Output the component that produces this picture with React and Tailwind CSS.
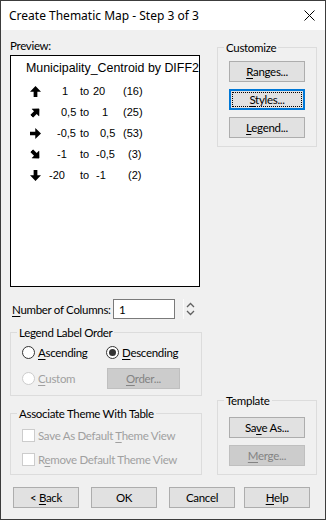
import React from "react";

const U = ({ children }) => <span className="underline underline-offset-[2px]">{children}</span>;

const Btn = ({ children, w = "w-[76px]", disabled, focused }) => {
  if (focused) {
    return (
      <div className={`${w} h-[21px] bg-[#e1e1e1] border-2 border-[#0078d7] p-[1px] flex`}>
        <div className="flex-1 border border-dotted border-black flex items-center justify-center leading-[15px]">
          {children}
        </div>
      </div>
    );
  }
  return (
    <div
      className={`${w} h-[21px] border flex items-center justify-center leading-[15px] ${
        disabled ? "bg-[#cccccc] border-[#bfbfbf] text-[#838383]" : "bg-[#e1e1e1] border-[#adadad] text-black"
      }`}
    >
      {children}
    </div>
  );
};

const Group = ({ title, className = "", children }) => (
  <div className={`relative border border-[#dcdcdc] ${className}`}>
    <span className="absolute left-[6px] top-[-8px] bg-[#f0f0f0] px-[2px] leading-[15px] whitespace-nowrap">{title}</span>
    {children}
  </div>
);

const Radio = ({ checked, disabled }) => (
  <span
    className={`w-[13px] h-[13px] rounded-full border flex items-center justify-center bg-white shrink-0 ${
      disabled ? "border-[#cccccc]" : "border-[#333333]"
    }`}
  >
    {checked && <span className="w-[7px] h-[7px] rounded-full bg-[#333333]" />}
  </span>
);

const Check = () => <span className="w-[13px] h-[13px] border border-[#cccccc] bg-white shrink-0" />;

const Arrow = ({ rot }) => (
  <svg width="11" height="11" viewBox="0 0 10 10" style={{ transform: `rotate(${rot}deg)` }}>
    <path d="M5 0 L10 5.2 L6.7 5.2 L6.7 10 L3.3 10 L3.3 5.2 L0 5.2 Z" fill="#000" />
  </svg>
);

const rows = [
  { rot: 0, lo: "1", loPl: "pl-[13px]", hi: "20", hiPl: "pl-0", n: "(16)", nPl: "pl-0" },
  { rot: 45, lo: "0,5", loPl: "pl-[12px]", hi: "1", hiPl: "pl-[9px]", n: "(25)", nPl: "pl-0" },
  { rot: 90, lo: "-0,5", loPl: "pl-[8px]", hi: "0,5", hiPl: "pl-[7px]", n: "(53)", nPl: "pl-0" },
  { rot: 135, lo: "-1", loPl: "pl-[8px]", hi: "-0,5", hiPl: "pl-[3px]", n: "(3)", nPl: "pl-[5px]" },
  { rot: 180, lo: "-20", loPl: "pl-0", hi: "-1", hiPl: "pl-[3px]", n: "(2)", nPl: "pl-[5px]" },
];

export default function App() {
  return (
    <div className="w-[326px] h-[520px] border border-[#3c3c3c] flex flex-col font-['Lato',sans-serif] text-[11.5px] tracking-[-0.3px] text-black overflow-hidden">
      {/* Title bar */}
      <div className="h-[29px] bg-white flex items-center pl-[8px] pr-[10px] shrink-0">
        <span className="flex-1 leading-[15px] text-[12px] tracking-normal font-['Noto_Sans',sans-serif]">
          Create Thematic Map - Step 3 of 3
        </span>
        <svg width="11" height="11" viewBox="0 0 11 11">
          <path d="M0.5 0.5 L10.5 10.5 M10.5 0.5 L0.5 10.5" stroke="#000" strokeWidth="1" />
        </svg>
      </div>

      {/* Body */}
      <div className="flex-1 bg-[#f0f0f0] flex flex-col pl-[9px]">
        <div className="flex">
          {/* Left column */}
          <div className="w-[192px] flex flex-col">
            <div className="mt-[8px] leading-[15px]">Preview:</div>
            <div className="mt-[2px] w-[190px] h-[232px] border border-black bg-white overflow-hidden whitespace-nowrap tracking-normal font-['Liberation_Sans',Arial,sans-serif]">
              <div className="pt-[5px] pl-[15px] text-[12.4px] leading-[14px]">Municipality_Centroid by DIFF2</div>
              <div className="mt-[6px] text-[11px]">
                {rows.map((r, i) => (
                  <div key={i} className="h-[21px] flex items-center leading-[13px]">
                    <div className="w-[38px] pl-[19px] flex items-center">
                      <Arrow rot={r.rot} />
                    </div>
                    <div className={`w-[31px] ${r.loPl}`}>{r.lo}</div>
                    <div className="w-[13px]">to</div>
                    <div className={`w-[30px] ${r.hiPl}`}>{r.hi}</div>
                    <div className={r.nPl}>{r.n}</div>
                  </div>
                ))}
              </div>
            </div>

            {/* Number of columns */}
            <div className="mt-[12px] h-[20px] flex items-center">
              <div className="w-[103px] pl-[2px] leading-[15px] whitespace-nowrap">
                <U>N</U>umber of Columns:
              </div>
              <div className="w-[62px] h-[20px] border border-[#7a7a7a] bg-white flex items-center pl-[5px] leading-[15px]">1</div>
              <div className="ml-[8px] w-[1px] h-[20px] bg-[#fbfbfb]" />
              <svg className="ml-[2px]" width="9" height="16" viewBox="0 0 9 16">
                <path d="M1 6 L4.5 2.5 L8 6" stroke="#606060" strokeWidth="1.3" fill="none" />
                <path d="M1 10 L4.5 13.5 L8 10" stroke="#606060" strokeWidth="1.3" fill="none" />
              </svg>
            </div>

            {/* Legend Label Order */}
            <Group title="Legend Label Order" className="mt-[13px] h-[64px]">
              <div className="pt-[12px] pl-[11px] flex flex-col">
                <div className="h-[15px] flex items-center">
                  <div className="w-[84px] flex items-center gap-[3px] leading-[15px]">
                    <Radio />
                    <span>
                      <U>A</U>scending
                    </span>
                  </div>
                  <div className="flex items-center gap-[3px] leading-[15px]">
                    <Radio checked />
                    <span>
                      <U>D</U>escending
                    </span>
                  </div>
                </div>
                <div className="mt-[8px] flex items-center">
                  <div className="w-[85px] flex items-center gap-[3px] leading-[15px] text-[#a0a0a0]">
                    <Radio disabled />
                    <span>
                      <U>C</U>ustom
                    </span>
                  </div>
                  <Btn w="w-[73px]" disabled>
                    <span>
                      <U>O</U>rder...
                    </span>
                  </Btn>
                </div>
              </div>
            </Group>

            {/* Associate Theme With Table */}
            <Group title="Associate Theme With Table" className="mt-[17px] h-[62px]">
              <div className="pt-[14px] pl-[11px] flex flex-col gap-[9px] text-[#a0a0a0]">
                <div className="h-[15px] flex items-center gap-[3px] leading-[15px] whitespace-nowrap">
                  <Check />
                  <span>
                    Save As Default <U>T</U>heme View
                  </span>
                </div>
                <div className="h-[15px] flex items-center gap-[3px] leading-[15px] whitespace-nowrap">
                  <Check />
                  <span>
                    R<U>e</U>move Default Theme View
                  </span>
                </div>
              </div>
            </Group>
          </div>

          {/* Right column */}
          <div className="ml-[15px] w-[100px] flex flex-col">
            <Group title="Customize" className="mt-[17px] h-[100px]">
              <div className="pt-[13px] flex flex-col items-center gap-[7px]">
                <Btn>
                  <span>
                    <U>R</U>anges...
                  </span>
                </Btn>
                <Btn focused>
                  <span>
                    <U>S</U>tyles...
                  </span>
                </Btn>
                <Btn>
                  <span>
                    <U>L</U>egend...
                  </span>
                </Btn>
              </div>
            </Group>
            <div className="flex-1" />
            <Group title="Template" className="h-[75px]">
              <div className="pt-[16px] flex flex-col items-center gap-[7px]">
                <Btn>
                  <span>
                    Sa<U>v</U>e As...
                  </span>
                </Btn>
                <Btn disabled>
                  <span>
                    <U>M</U>erge...
                  </span>
                </Btn>
              </div>
            </Group>
          </div>
        </div>

        {/* Bottom buttons */}
        <div className="mt-[12px] ml-[3px] flex">
          <Btn w="w-[66px]">
            <span>
              &lt; <U>B</U>ack
            </span>
          </Btn>
          <div className="ml-[12px]">
            <Btn w="w-[66px]">OK</Btn>
          </div>
          <div className="ml-[12px]">
            <Btn w="w-[66px]">Cancel</Btn>
          </div>
          <div className="ml-[9px]">
            <Btn w="w-[66px]">
              <span>
                <U>H</U>elp
              </span>
            </Btn>
          </div>
        </div>
      </div>
    </div>
  );
}
